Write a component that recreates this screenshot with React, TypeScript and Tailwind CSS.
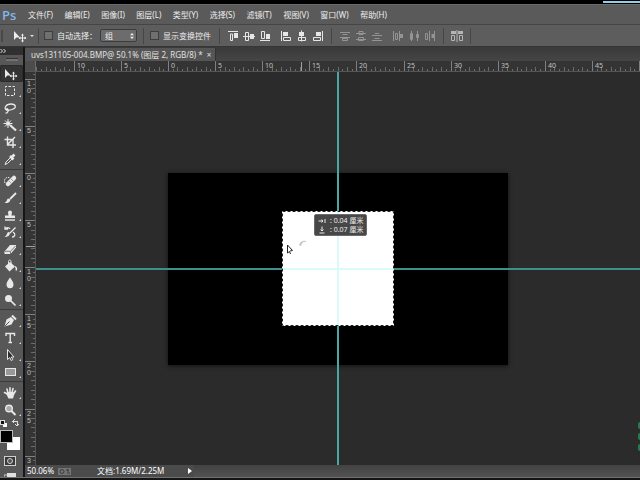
import { useLayoutEffect, useRef, useState } from 'react';
import type { ReactNode } from 'react';

const UI_FONT = "font-['Noto_Sans','Noto_Sans_CJK_SC',sans-serif]";

const menus = ['文件(F)', '编辑(E)', '图像(I)', '图层(L)', '类型(Y)', '选择(S)', '滤镜(T)', '视图(V)', '窗口(W)', '帮助(H)'];

function Icon({ children, className = 'size-4' }: { children: ReactNode; className?: string }) {
  return (
    <svg viewBox="0 0 16 16" className={className} fill="none" stroke="currentColor" aria-hidden="true">
      {children}
    </svg>
  );
}

const moveArt = (
  <>
    <path d="M3 3v9l2.400-2.500H9z" fill="currentColor" stroke="none" />
    <path d="M11.500 6.500v7M8 10h7" />
    <path d="M11.500 5.500l-1.500 2h3zM11.500 14.500l-1.500-2h3zM7.500 10l2-1.500v3zM15.500 10l-2-1.500v3z" fill="currentColor" stroke="none" />
  </>
);

type Tool = { name: string; art: ReactNode };

const toolGroups: Tool[][] = [
  [
    { name: '移动', art: moveArt },
    { name: '选框', art: <rect x="3.500" y="3.500" width="9" height="9" strokeDasharray="2.500 1.500" strokeDashoffset="1" /> },
    { name: '套索', art: <path d="M5 10.500C1 8.500 4 4 9 4s6 4 1 5.500c-3 1-6 .5-5.500-.5S7 9.500 6 11.500 4 13 3.500 13" strokeWidth="1.300" /> },
    { name: '魔棒', art: <><path d="M8 8l6 5.500" strokeWidth="2.200" /><path d="M6 2v9M1.500 6.500h9M3 3.500l6 6M9 3.500l-6 6" /><circle cx="6" cy="6.500" r="2" fill="currentColor" stroke="none" /></> },
    { name: '裁剪', art: <path d="M5.500 2.500v8.500H14M2.500 5.500H11v8.500M5.500 10.500L13 3" strokeWidth="1.400" /> },
    { name: '吸管', art: <><path d="M3 13.500l1-2.500 5-5 1.500 1.500-5 5z" /><path d="M8 5l3.500 3.500M9.500 6.500L12.500 3.500" strokeWidth="2.600" /></> },
  ],
  [
    { name: '修复画笔', art: <><path d="M6 11L12 5" strokeWidth="4.500" strokeLinecap="round" /><path d="M7 8l3 3M9 6l3 3" stroke="#777" strokeDasharray="1 1" /><path d="M3 10c-2-4 2-7 5-5" strokeDasharray="1.500 1" /></> },
    { name: '画笔', art: <><path d="M14 3L8 9" strokeWidth="1.800" /><path d="M8.500 9.500c-.5 3-3 4-6.500 3.500 2.500-.5 2.500-3 4-4.500z" fill="currentColor" stroke="none" /></> },
    { name: '仿制图章', art: <><path d="M6.500 8.500L6 5.500a2 2 0 114 0l-.5 3H13V11H3V8.500z" fill="currentColor" stroke="none" /><path d="M3 13h10" strokeWidth="1.400" /></> },
    { name: '历史记录画笔', art: <><path d="M13.500 3.500L8 9M3 5c2-2 4-1.500 5 0M3 2.500V5h3M11 8c3 2 2 5-1 5" strokeWidth="1.300" /><path d="M8 8.500c0 3-2 4.500-5.500 4.500 2-1 2-3 3.500-5z" fill="currentColor" stroke="none" /></> },
    { name: '橡皮擦', art: <><path d="M2.500 10.500L8 4h6v2.500L8.500 13h-6z" fill="currentColor" stroke="none" /><path d="M3 10.300h5.500L13.500 5M8.500 10.500V13" stroke="#777" /></> },
    { name: '油漆桶', art: <><path d="M3 8.500L8 4l5 4.500L7.500 13.500z" fill="currentColor" stroke="none" /><path d="M6.500 7.500V3.500C6.500 1.500 9 1.500 9 3.500V7" /><path d="M13 8.500c1.500 1 1.500 3 1 4" strokeWidth="1.500" /></> },
    { name: '模糊', art: <path d="M8 2.500c2 3 3.500 4.500 3.500 7a3.500 3.700 0 01-7 0c0-2.500 1.500-4 3.500-7z" fill="currentColor" stroke="none" /> },
    { name: '减淡', art: <><circle cx="6.500" cy="6.500" r="3.500" fill="currentColor" stroke="none" /><path d="M8.500 8.500l5 5" strokeWidth="1.700" /></> },
  ],
  [
    { name: '钢笔', art: <><path d="M2.500 13.500l2-7L9 4l3 3-2.500 4.500z" fill="currentColor" stroke="none" /><path d="M10 2.500l4 4" strokeWidth="2" /><path d="M3 13l4.500-4.500" stroke="#555" /></> },
    { name: '文字', art: <path d="M4 6V3.500h8.500V6M8.200 3.500v9M6.500 12.500h3.500" strokeWidth="1.400" /> },
    { name: '路径选择', art: <path d="M5.500 2.500v10l2.300-2 1.400 3 1.600-.8-1.400-2.700H12z" fill="#303030" /> },
    { name: '矩形', art: <rect x="3.500" y="4.500" width="10" height="7" fill="#999" /> },
  ],
  [
    { name: '抓手', art: <><path d="M5.500 9l-3-1.500M6 8L5 4M8 7.500V2.800M10 8l1-4.500M11.500 9l2-3" strokeWidth="1.600" strokeLinecap="round" /><path d="M4 8.500l1.500-1.500h6l.8 2L11 13.500H6.500z" fill="currentColor" stroke="none" /></> },
    { name: '缩放', art: <><circle cx="7" cy="6.500" r="3.300" fill="#aaa" strokeWidth="1.400" /><path d="M9.500 9l4 4" strokeWidth="2" /></> },
  ],
];

function ToolButton({ tool, active }: { tool: Tool; active: boolean }) {
  return (
    <button
      type="button"
      aria-label={tool.name}
      aria-pressed={active}
      className={`relative flex h-[17px] w-full items-center justify-center rounded-xs pr-1 ${active ? 'bg-[#333333] ring-1 ring-[#2b2b2b] ring-inset' : ''}`}
    >
      <Icon>{tool.art}</Icon>
      {!active && (
        <svg viewBox="0 0 2 2" className="absolute right-0.5 bottom-0.5 size-0.5" aria-hidden="true">
          <path d="M2 0v2H0z" fill="#d8d8d8" />
        </svg>
      )}
    </button>
  );
}

type AlignItem = { name: string; art: ReactNode };

const alignTop: AlignItem[] = [
  { name: '顶对齐', art: <><path d="M3 3.500h10M5.500 6v6.500h2V6z" /><path d="M9 5h4v5H9z" fill="currentColor" stroke="none" /></> },
  { name: '垂直居中对齐', art: <><path d="M2 8.500h12M4.500 4.500h3v8h-3z" /><path d="M9 6h4v5H9z" fill="currentColor" stroke="none" /></> },
  { name: '底对齐', art: <><path d="M3 12.500h10M4.500 10.500v-7h3v7z" /><path d="M9 6h4v5H9z" fill="currentColor" stroke="none" /></> },
];
const alignSide: AlignItem[] = [
  { name: '左对齐', art: <><path d="M3.500 3v10M5.500 9.500h7v3h-7z" /><path d="M5 4h5v4H5z" fill="currentColor" stroke="none" /></> },
  { name: '水平居中对齐', art: <><path d="M7.500 2.500v11M4.500 9.500h7v3h-7z" /><path d="M5 4h5v4H5z" fill="currentColor" stroke="none" /></> },
  { name: '右对齐', art: <><path d="M12.500 3v10M3.500 9.500h7v3h-7z" /><path d="M6 4h5v4H6z" fill="currentColor" stroke="none" /></> },
];
const spreadRows: AlignItem[] = [
  { name: '按顶分布', art: <path d="M3 4.500h10M5.500 6.500h5M3 9.500h10M5.500 12.500h5v-2h-5z" /> },
  { name: '垂直居中分布', art: <path d="M3 5.500h10M6 3.500h4v3H6zM3 11.500h10M5.500 9.500h5v3h-5z" /> },
  { name: '按底分布', art: <path d="M3 7.500h10M6 5.500h4M3 12.500h10M5.500 10.500h5" /> },
];
const spreadColumns: AlignItem[] = [
  { name: '按左分布', art: <><path d="M3.500 3v10M5.500 5.500h2v6h-2zM9.500 3v10" /><path d="M10 6h3v4h-3z" fill="currentColor" stroke="none" /></> },
  { name: '水平居中分布', art: <path d="M5.500 3v10M4.500 5.500h2v6h-2zM11.500 3v10M10.500 6.500h2v3h-2z" /> },
  { name: '按右分布', art: <><path d="M7.500 3v10M3.500 5.500h2v6h-2zM12.500 3v10" /><path d="M9.500 6h3v4h-3z" fill="currentColor" stroke="none" /></> },
];

function AlignGroup({ items, dim = false }: { items: AlignItem[]; dim?: boolean }) {
  return (
    <div className={`flex ${dim ? 'text-[#949494]' : 'text-[#e6e6e6]'}`}>
      {items.map((item) => (
        <button key={item.name} type="button" aria-label={item.name} disabled={dim} className="flex size-4 items-center justify-center">
          <Icon className="size-4">{item.art}</Icon>
        </button>
      ))}
    </div>
  );
}

function Divider() {
  return <div className="h-4 w-px bg-[#464646]" />;
}

function CheckField({ label }: { label: string }) {
  return (
    <label className="flex items-center gap-1 whitespace-nowrap">
      <input type="checkbox" className="size-[9px] appearance-none border border-[#3e3e3e] bg-[#707070]" />
      {label}
    </label>
  );
}

const STEP = 47.1;

function useExtent() {
  const ref = useRef<SVGSVGElement>(null);
  const [extent, setExtent] = useState({ width: 0, height: 0 });
  useLayoutEffect(() => {
    const node = ref.current;
    if (!node) return;
    const measure = () => {
      const box = node.getBoundingClientRect();
      setExtent({ width: box.width, height: box.height });
    };
    measure();
    const observer = new ResizeObserver(measure);
    observer.observe(node);
    return () => observer.disconnect();
  }, []);
  return { ref, extent };
}

function tickOffsets(origin: number, length: number) {
  const ticks: { at: number; index: number }[] = [];
  for (let index = -30; index < 600; index += 1) {
    const at = Math.round(origin + (index * STEP) / 10);
    if (at >= 0 && at < length) ticks.push({ at, index });
  }
  return ticks;
}

function TopRuler() {
  const { ref, extent } = useExtent();
  const ticks = tickOffsets(132, extent.width);
  return (
    <svg ref={ref} className="h-2.5 min-w-0 flex-1 overflow-hidden bg-[#343434]" shapeRendering="crispEdges" aria-hidden="true">
      {ticks.map(({ at, index }) => (
        <rect
          key={index}
          x={at}
          y={index % 10 === 0 ? 0 : index % 2 === 0 ? 6 : 8}
          width="1"
          height="10"
          fill={index % 10 === 0 ? '#808080' : '#6c6c6c'}
        />
      ))}
      <rect x="265" y="1" width="1" height="9" fill="#a0a0a0" />
      {ticks
        .filter(({ at, index }) => index % 10 === 0 && at < extent.width - 12)
        .map(({ at, index }) => (
          <text key={index} x={at + 3} y="7" fontSize="7" fill="#c0c0c0">
            {Math.abs(index / 2)}
          </text>
        ))}
    </svg>
  );
}

function SideRuler() {
  const { ref, extent } = useExtent();
  const ticks = tickOffsets(101, extent.height);
  return (
    <svg ref={ref} className="min-h-0 w-2.5 flex-1 overflow-hidden bg-[#343434] font-['Liberation_Sans',sans-serif]" shapeRendering="crispEdges" aria-hidden="true">
      {ticks.map(({ at, index }) => (
        <rect
          key={index}
          y={at}
          x={index % 10 === 0 ? 0 : index % 2 === 0 ? 6 : 8}
          height="1"
          width="10"
          fill={index % 10 === 0 ? '#808080' : '#6c6c6c'}
        />
      ))}
      <rect x="1" y="174" width="9" height="1" fill="#a0a0a0" />
      {ticks
        .filter(({ index }) => index % 10 === 0)
        .map(({ at, index }) =>
          String(Math.abs(index / 2))
            .split('')
            .map((digit, row) => ({ digit, baseline: at + 7 + row * 7 }))
            .filter(({ baseline }) => baseline < extent.height)
            .map(({ digit, baseline }) => (
              <text key={baseline} x="2" y={baseline} fontSize="7" fill="#c0c0c0">
                {digit}
              </text>
            )),
        )}
    </svg>
  );
}

function Workspace() {
  return (
    <main className="relative min-h-0 min-w-0 flex-1 overflow-hidden bg-[#2b2b2b]">
      <div className="absolute top-[101px] left-[132px] h-[192px] w-[340px] bg-black shadow-[0_1px_4px_#111111]" />
      <div className="absolute inset-y-0 left-[301px] w-[2px] bg-[#4aa5a3]" />
      <div className="absolute inset-x-0 top-[196px] h-[2px] bg-[#3f8f8d]" />
      <div className="absolute top-[139px] left-[246px] h-[115px] w-[112px] bg-white">
        <div className="absolute inset-y-0 left-[55px] w-[2px] bg-[#dcfafa]" />
        <div className="absolute inset-x-0 top-[57px] h-[2px] bg-[#dcfafa]" />
        <svg className="absolute inset-0 size-full" aria-hidden="true">
          <rect x="0.500" y="0.500" width="111" height="114" fill="none" stroke="white" />
          <rect x="0.500" y="0.500" width="111" height="114" fill="none" stroke="#222222" strokeDasharray="3 2" />
          <path d="M17 34c2-5 6-5 8-3-4-1-5 1-6 4z" fill="#c4c4c4" />
          <path d="M5.500 34v8l2-1.500 1 2.500M5.500 34l5 5.500-2.500.5" fill="white" stroke="#222222" />
        </svg>
      </div>
      <div role="status" className="absolute top-[142px] left-[278px] rounded-xs border border-[#6a6a6a] bg-[#474747] px-[3px] py-px text-[7px] leading-[9px] whitespace-pre text-[#ececec]">
        <div className="flex items-center gap-1">
          <Icon className="size-2"><path d="M1 8h9M7 5l3 3-3 3M14 4v8" strokeWidth="2" /></Icon>
          <span>: 0.04 厘米</span>
        </div>
        <div className="flex items-center gap-1">
          <Icon className="size-2"><path d="M8 1v9M5 7l3 3 3-3M3 14h10" strokeWidth="2" /></Icon>
          <span>: 0.07 厘米</span>
        </div>
      </div>
      <div className="absolute top-[350px] right-0 flex flex-col gap-1 overflow-hidden">
        <span className="h-[7px] w-0.5 rounded-l-full bg-[#267a50]" />
        <span className="h-[7px] w-0.5 rounded-l-full bg-[#267a50]" />
        <span className="h-[7px] w-0.5 rounded-l-full bg-[#267a50]" />
      </div>
    </main>
  );
}

function Toolbar() {
  return (
    <aside className="flex w-[23px] shrink-0 flex-col overflow-hidden bg-[#575757] text-[#e8e8e8]">
      <div className="flex h-2 shrink-0 items-center bg-[#303030]">
        <svg viewBox="0 0 6 4" className="h-1 w-1.5" fill="none" stroke="#dddddd" aria-hidden="true">
          <path d="M.5 0l2 2-2 2M3.500 0l2 2-2 2" />
        </svg>
      </div>
      <div className="flex h-2.5 shrink-0 justify-center pt-[3px]">
        <div className="h-[3px] w-3 border-t border-[#333333] bg-[#727272]" />
      </div>
      {toolGroups.map((group, position) => (
        <div
          key={group[0].name}
          className={position === 0 ? 'shrink-0' : position === 1 ? 'mt-0.5 shrink-0 border-t border-[#3c3c3c] pt-0.5' : 'mt-px shrink-0 border-t border-[#3c3c3c] pt-0.5'}
        >
          {group.map((tool) => (
            <ToolButton key={tool.name} tool={tool} active={tool.name === '移动'} />
          ))}
        </div>
      ))}
      <svg viewBox="0 0 23 36" className="h-9 w-[23px] shrink-0" shapeRendering="crispEdges" aria-hidden="true">
        <rect x="3" y="5" width="4" height="4" fill="#ffffff" />
        <rect x="0.500" y="2.500" width="4" height="4" fill="#111111" stroke="#dddddd" />
        <path d="M13 3.500h4v4M14.500 1.500l-2 2 2 2M15 6l2 2 2-2" fill="none" stroke="#e0e0e0" />
        <rect x="7" y="19" width="13" height="13" fill="#ffffff" />
        <rect x="0.500" y="12.500" width="12" height="12" fill="#000000" stroke="#bbbbbb" />
      </svg>
      <button type="button" aria-label="快速蒙版" className="flex shrink-0 pt-0.5 pl-1">
        <svg viewBox="0 0 12 10" className="h-2.5 w-3" aria-hidden="true">
          <rect x="0.500" y="0.500" width="11" height="9" fill="#3a3a3a" stroke="#d0d0d0" />
          <circle cx="6" cy="5" r="2.500" fill="#555555" stroke="#d0d0d0" />
        </svg>
      </button>
      <button type="button" aria-label="屏幕模式" className="flex shrink-0 pt-1.5 pl-1">
        <svg viewBox="0 0 12 8" className="h-2 w-3" aria-hidden="true">
          <rect x="0" y="3" width="8" height="4" fill="#555555" stroke="#d0d0d0" />
          <rect x="3" y="1" width="9" height="5" fill="#e0e0e0" />
        </svg>
      </button>
    </aside>
  );
}

export default function App() {
  return (
    <div lang="zh-CN" className={`${UI_FONT} flex h-screen flex-col overflow-hidden bg-[#161616] text-[8px] leading-[12px] text-[#ededed]`}>
      <div className="flex h-1 shrink-0 justify-end bg-black">
        <div className="mt-px h-0.5 w-[37px] bg-[#8fd0e6]" />
      </div>
      <header className="shrink-0">
        <nav className="flex h-5 items-center border-t border-[#6a6a6a] bg-[#5a5a5a] whitespace-nowrap">
          <span className="w-[28px] pl-0.5 font-['Open_Sans',sans-serif] text-[13px] font-semibold text-[#80b7e8]">Ps</span>
          <div className="flex w-[359px] justify-between">
            {menus.map((menu) => (
              <button key={menu} type="button">{menu}</button>
            ))}
          </div>
        </nav>
        <div className="flex h-[23px] items-center border-t border-b border-t-[#454545] border-b-[#353535] bg-[#5d5d5d]">
          <div className="ml-px h-3 w-0.5 border-x border-[#484848]" />
          <button type="button" aria-label="移动工具预设" className="ml-2 flex w-[27px] items-center justify-between pr-1">
            <Icon className="size-4">{moveArt}</Icon>
            <svg viewBox="0 0 4 2" className="h-0.5 w-1" aria-hidden="true"><path d="M0 0h4L2 2z" fill="#e0e0e0" /></svg>
          </button>
          <Divider />
          <div className="ml-[5px] flex w-[56px]"><CheckField label="自动选择：" /></div>
          <div className="relative">
            <select aria-label="自动选择" className="h-[13px] w-[37px] appearance-none rounded-xs border border-[#3c3c3c] bg-[#6c6c6c] pl-1 text-[8px] leading-[10px]">
              <option>组</option>
              <option>图层</option>
            </select>
            <svg viewBox="0 0 4 6" className="pointer-events-none absolute top-1 right-[3px] h-1.5 w-1" aria-hidden="true">
              <path d="M0 2.200h4L2 0zM0 3.800h4L2 6z" fill="#eeeeee" />
            </svg>
          </div>
          <div className="ml-1.5"><Divider /></div>
          <div className="ml-1.5 flex w-[69px]"><CheckField label="显示变换控件" /></div>
          <Divider />
          <div className="flex gap-[5px] px-[5px]">
            <AlignGroup items={alignTop} />
            <AlignGroup items={alignSide} />
          </div>
          <Divider />
          <div className="flex gap-[5px] px-[5px]">
            <AlignGroup items={spreadRows} dim />
            <AlignGroup items={spreadColumns} dim />
          </div>
          <Divider />
          <button type="button" aria-label="自动对齐图层" className="mx-[5px] flex size-4 items-center justify-center text-[#b4b4b4]">
            <Icon className="size-4">
              <path d="M2 3h5v3H2zM9 3h5v3H9z" fill="currentColor" stroke="none" />
              <path d="M2.500 7.500v5h3v-5zM10.500 7.500v5h3v-5zM8 2v12" />
            </Icon>
          </button>
          <Divider />
        </div>
      </header>
      <div className="flex min-h-0 flex-1">
        <Toolbar />
        <div className="ml-0.5 flex min-w-0 flex-1 flex-col">
          <div className="flex h-3.5 shrink-0 bg-linear-to-b from-[#3a3a3a] to-[#454545]">
            <div className="mt-px flex items-center gap-1 border-r border-[#333333] bg-[#555555] pr-1 pl-1.5 whitespace-nowrap text-[#e0e0e0]">
              <span>uvs131105-004.BMP@ 50.1% (图层 2, RGB/8) *</span>
              <button type="button" aria-label="关闭">×</button>
            </div>
          </div>
          <div className="flex shrink-0 border-b border-[#555555]">
            <div className="w-[11px] border-r border-[#6c6c6c] bg-[#4c4c4c]" />
            <TopRuler />
          </div>
          <div className="flex min-h-0 flex-1">
            <div className="flex w-[11px] flex-col border-r border-[#555555]">
              <SideRuler />
            </div>
            <Workspace />
          </div>
          <footer className="flex h-3 shrink-0 items-center bg-linear-to-b from-[#424242] to-[#535353] whitespace-nowrap">
            <div className="flex h-full w-[169px] items-center bg-[#4b4b4b] pl-0.5 text-white">
              <span className="w-[31px]">50.06%</span>
              <svg viewBox="0 0 13 7" className="h-[7px] w-[13px]" aria-hidden="true">
                <path d="M0 0h13v7H0z" fill="#747474" />
                <circle cx="4" cy="3.500" r="2" fill="none" stroke="#3c3c3c" />
                <path d="M8 2h3M9 5h3M10 1v3" stroke="#3c3c3c" />
              </svg>
              <span className="ml-[26px] flex-1">文档:1.69M/2.25M</span>
              <button type="button" aria-label="状态信息" className="pr-0.5">
                <svg viewBox="0 0 4 6" className="h-1.5 w-1" aria-hidden="true"><path d="M0 0l4 3-4 3z" fill="#ffffff" /></svg>
              </button>
            </div>
          </footer>
        </div>
      </div>
      <div className="h-[3px] shrink-0 border-t border-[#707070] bg-[#151515]" />
    </div>
  );
}
